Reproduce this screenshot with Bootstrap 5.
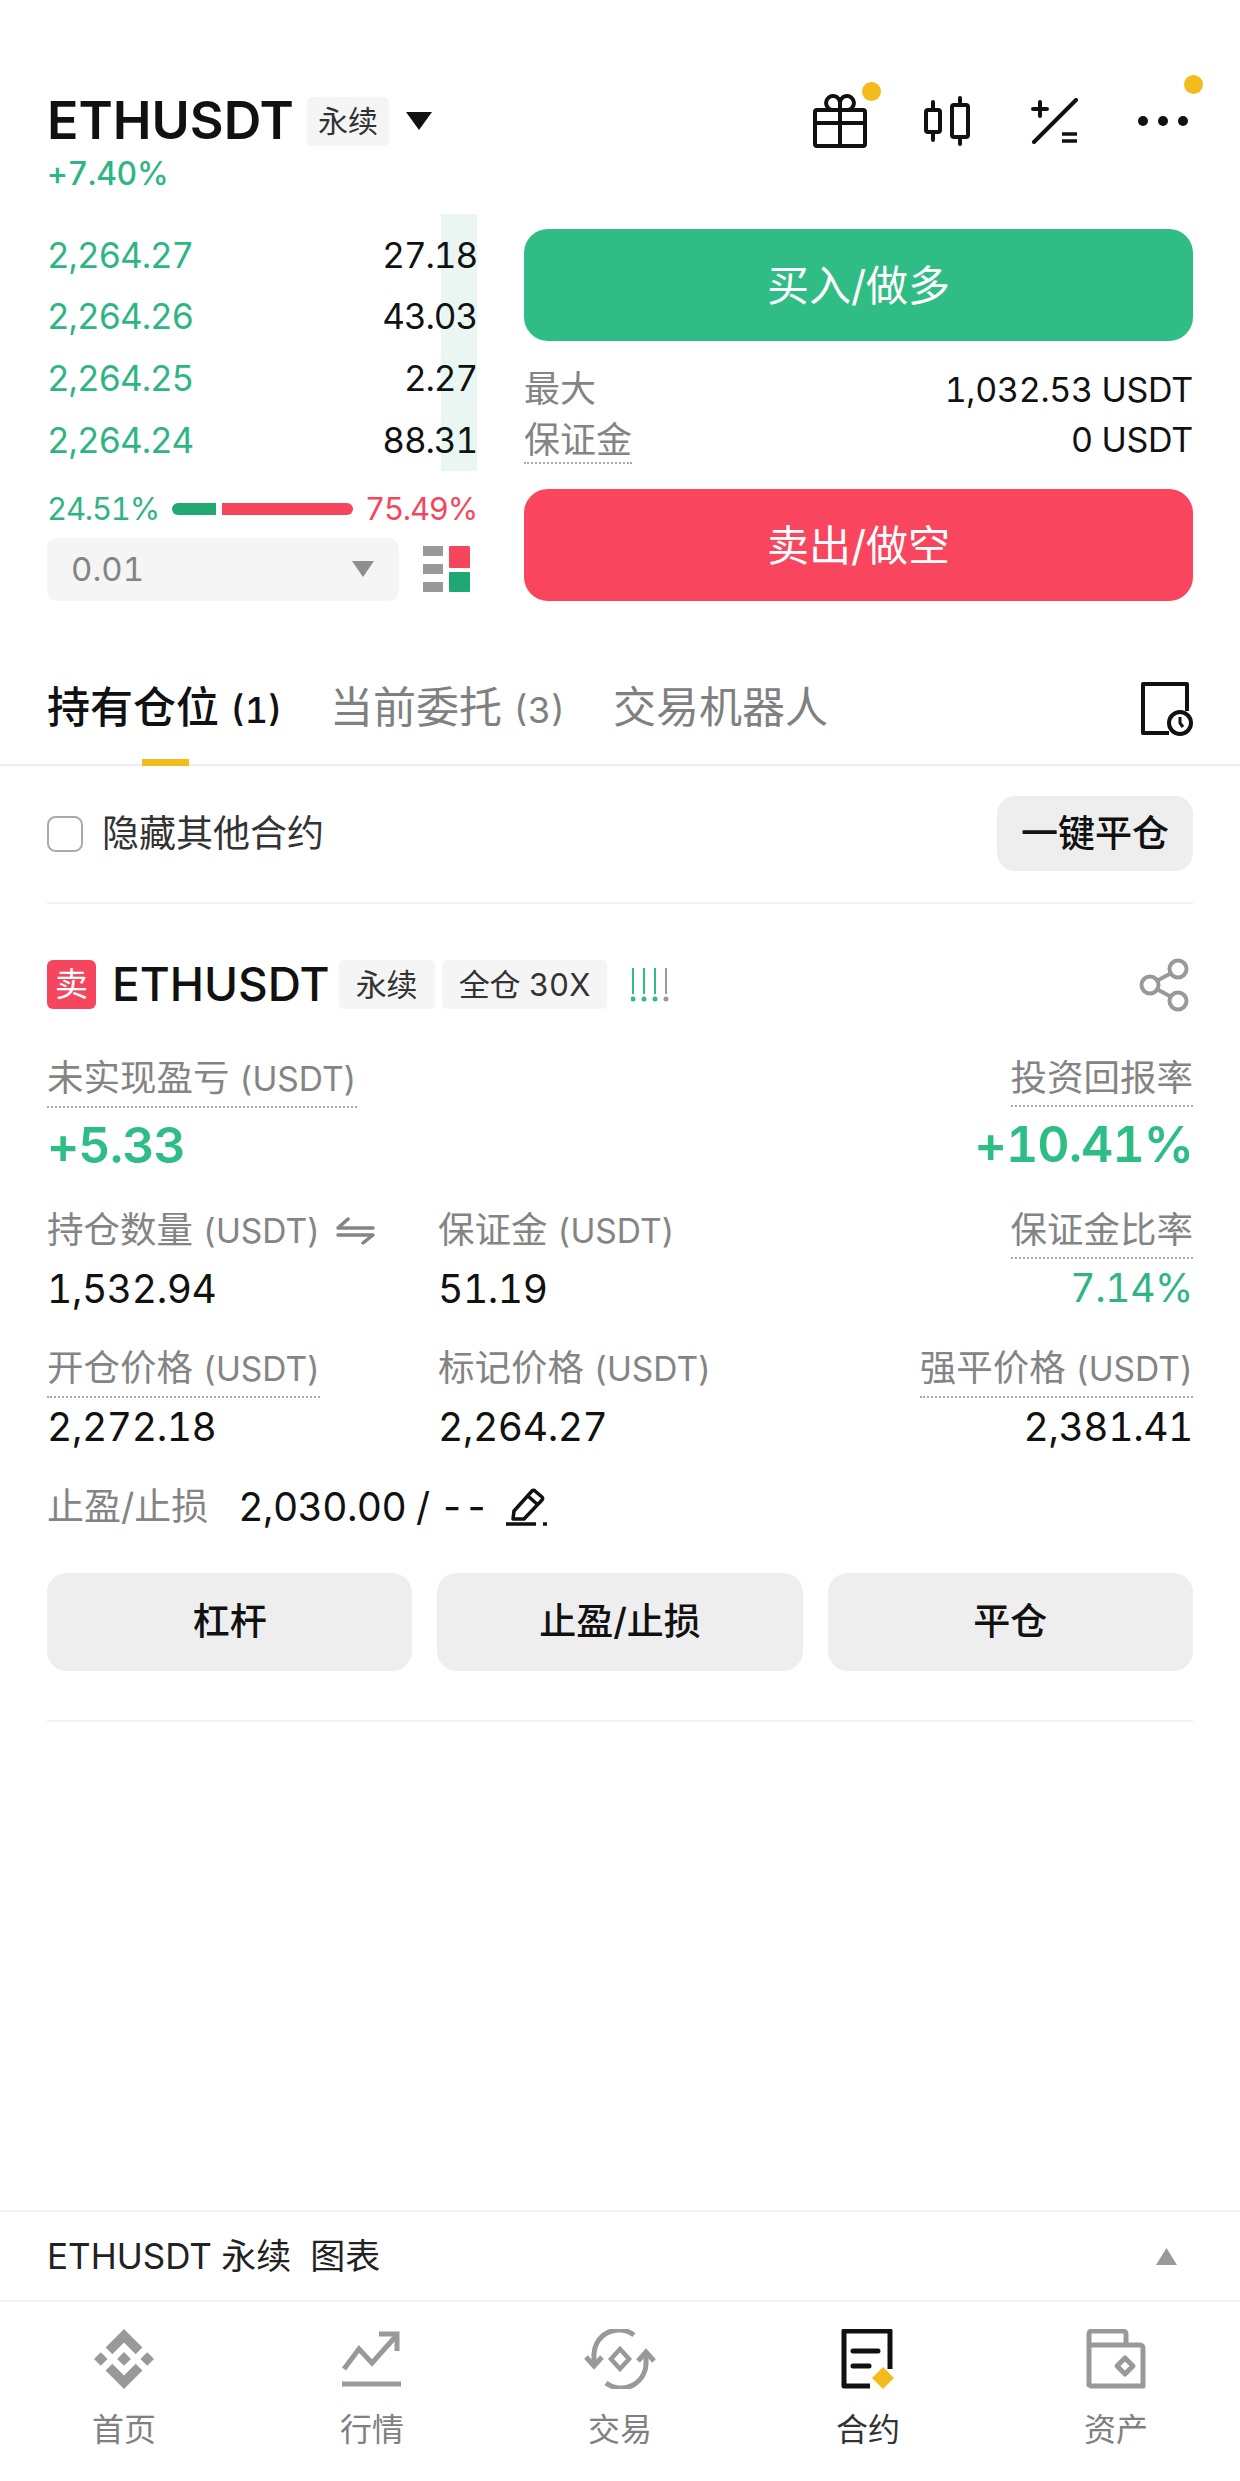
<!DOCTYPE html>
<html lang="zh-CN">
<head>
  <meta charset="UTF-8">
  <meta name="viewport" content="width=device-width, initial-scale=1.0">
  <title>ETHUSDT 永续</title>
  <link href="https://cdn.jsdelivr.net/npm/bootstrap@5.3.0/dist/css/bootstrap.min.css" rel="stylesheet">
  <script src="https://cdn.jsdelivr.net/npm/bootstrap@5.3.0/dist/js/bootstrap.bundle.min.js"></script>
  <style>
    body { font-family: "Inter", "Noto Sans CJK SC", sans-serif; color: #111; background: #fff; font-size: 34px; font-variant-numeric: tabular-nums; }
    svg { display: block; }
    .txt-green { color: #2fb585; }
    .txt-red { color: #f6465d; }
    .txt-grey { color: #848484; }

    .head-pad { padding: 90px 47px 0; }
    .head-row { height: 62px; }
    .pair-name { font-size: 52px; font-weight: 600; line-height: 62px; margin-right: 13px; }
    .tag-chip { background: #f5f5f5; border-radius: 5px; font-size: 30px; color: #333; height: 49px; line-height: 49px; padding: 0 11px; }
    .caret-down { width: 26px; height: 18px; margin-left: 17px; }
    .head-icons { height: 62px; padding-right: 5px; }
    .icon-wrap { width: 54px; height: 54px; }
    .note-dot { width: 19px; height: 19px; background: #f3bc1c; border-radius: 50%; top: -12px; right: -14px; }
    .day-change { font-size: 32px; letter-spacing: -0.3px; line-height: 40px; font-weight: 500; padding-top: 2px; height: 40px; }

    .trade-area { margin-top: 22px; gap: 47px; }
    .trade-left { width: 430px; }
    .book { padding-top: 10px; }
    .book-depth { top: 0; bottom: 0; right: 0; width: 36px; background: #e9f6f1; }
    .book-row { height: 61.7px; font-size: 35px; letter-spacing: -1.1px; }
    .ratio-row { margin-top: 20px; height: 36px; font-size: 31px; letter-spacing: -1.2px; margin-bottom: -1px; }
    .ratio-bars { gap: 6px; width: 181px; height: 12px; }
    .bar-buy { background: #22a873; border-radius: 6px 0 0 6px; }
    .bar-sell { background: #f6465d; border-radius: 0 6px 6px 0; }
    .size-row { margin-top: 12px; height: 63px; }
    .size-box { width: 352px; height: 63px; background: #f5f5f5; border-radius: 10px; padding: 0 25px 0 24px; font-size: 33px; color: #848484; }
    .mini-caret { width: 22px; height: 16px; }
    .depth-icon { margin-right: 7px; }

    .trade-right { width: 669px; padding-top: 15px; }
    .big-btn { height: 112px; border-radius: 24px; font-size: 42px; color: #fff; width: 100%; border: 0; }
    .btn-buy, .btn-buy:hover { background: #30bd85; color: #fff; }
    .btn-sell, .btn-sell:hover { background: #f9455d; color: #fff; }
    .avail-rows { margin-top: 23px; margin-bottom: 25px; font-size: 34px; letter-spacing: -0.3px; }
    .avail-line { height: 50px; }
    .avail-name { font-size: 36px; letter-spacing: 0; }
    .dash-under { border-bottom: 2px dotted #aaa; line-height: 1.2; padding-top: 5px; }

    .tab-row { margin-top: 65px; height: 100px; padding: 0 47px; border-bottom: 2px solid #eee; }
    .tab-item { font-size: 43px; line-height: 82px; margin-right: 48px; color: #808080; height: 98px; }
    .tab-on { color: #111; font-weight: 500; }
    .tab-mark { width: 47px; height: 7px; background: #f3bc1c; bottom: -2px; left: 50%; margin-left: -23px; }
    .tab-count { font-size: 36px; }
    .history-icon { margin-top: 16px; }

    .filter-row { margin: 0 47px; padding: 30px 0 31px; border-bottom: 2px solid #f2f2f2; }
    .hide-check { width: 36px; height: 36px; margin: 0 19px 0 0; border: 2px solid #aaa; border-radius: 5px; }
    .filter-label { font-size: 37px; color: #333; }
    .grey-btn, .grey-btn:hover { background: #eee; color: #111; border: 0; font-weight: 500; font-size: 37px; }
    .close-all { width: 196px; height: 75px; border-radius: 18px; padding: 0; }

    .pos-card { margin: 0 47px; padding: 56px 0 49px; border-bottom: 2px solid #f2f2f2; }
    .pos-head { height: 49px; }
    .side-badge { width: 49px; height: 49px; background: #f6465d; color: #fff; border-radius: 6px; font-size: 33px; line-height: 49px; text-align: center; }
    .pos-name { font-size: 46px; font-weight: 500; margin: 0 9px 0 16px; line-height: 49px; }
    .pos-tag { margin-right: 7px; padding: 0 17px; font-size: 31px; }
    .signal { margin-left: 17px; }

    .metric-one { width: 391px; }
    .lab { display: inline-block; font-size: 36.5px; line-height: 46px; color: #848484; padding-bottom: 4px; border-bottom: 2px dotted transparent; }
    .lab-unit { font-size: 33.5px; }
    .lab-dot { border-bottom-color: #aaa; }
    .val-big { font-size: 50px; letter-spacing: -1px; line-height: 60px; font-weight: 600; margin-top: 7px; color: #2ebd85; }
    .val { font-size: 39px; letter-spacing: -0.4px; line-height: 50px; margin-top: 4px; }
    .pnl-row { margin-top: 44px; }
    .row-two { margin-top: 30px; }
    .row-three { margin-top: 29px; }
    .tp-row { margin-top: 30px; height: 50px; }
    .tp-label { font-size: 37px; }
    .tp-val { font-size: 39px; letter-spacing: -0.6px; margin: 0 17px 0 30px; }
    .act-row { margin-top: 41px; gap: 25px; }
    .act-btn { height: 98px; border-radius: 20px; flex: 1 1 0; padding: 0; }

    .chart-bar { height: 92px; padding: 0 47px; border-top: 2px solid #f0f0f0; border-bottom: 2px solid #f0f0f0; font-size: 35px; color: #222; }
    .tabbar { height: 179px; padding-top: 27px; }
    .bar-icon { height: 60px; }
    .bar-label { font-size: 32px; line-height: 40px; margin-top: 21px; color: #808080; }
    .bar-label-on { color: #333; }
  </style>
</head>
<body class="d-flex flex-column min-vh-100">

  <!-- Header -->
  <div class="head-pad">
    <div class="head-row d-flex justify-content-between align-items-center">
      <div class="d-flex align-items-center">
        <span class="pair-name">ETHUSDT</span>
        <span class="tag-chip">永续</span>
        <svg class="caret-down" viewBox="0 0 26 18"><path d="M0 0h26L13 18z" fill="#111"/></svg>
      </div>
      <div class="head-icons d-flex align-items-center">
        <div class="icon-wrap position-relative">
          <svg width="54" height="54" viewBox="0 0 54 54" fill="none" stroke="#111" stroke-width="4" stroke-linejoin="round">
            <rect x="2" y="16" width="50" height="36" rx="2"/>
            <path d="M2 29h50M27 16v36"/>
            <path d="M27 16V10a7 7 0 1 0-7 6M27 16V10a7 7 0 1 1 7 6"/>
          </svg>
          <span class="note-dot position-absolute"></span>
        </div>
        <svg style="margin-left:57px" width="46" height="50" viewBox="0 0 46 50" fill="none" stroke="#111" stroke-width="4" stroke-linecap="round" stroke-linejoin="round">
          <rect x="2" y="14" width="14" height="22" rx="2"/>
          <rect x="28" y="9" width="16" height="32" rx="2"/>
          <path d="M9 6v8M9 36v8M36 2v7M36 41v7"/>
        </svg>
        <svg style="margin-left:61px" width="47" height="46" viewBox="0 0 47 46" fill="none" stroke="#111" stroke-linecap="round">
          <path d="M3 44 45 2" stroke-width="4"/>
          <path d="M2 11h14M9 4v14" stroke-width="4"/>
          <path d="M31 36h15M31 43h15" stroke-width="3.5" stroke-linecap="butt"/>
        </svg>
        <div class="position-relative" style="margin-left:60px">
          <svg width="50" height="12" viewBox="0 0 50 12" fill="#111"><circle cx="5" cy="6" r="5"/><circle cx="25" cy="6" r="5"/><circle cx="45" cy="6" r="5"/></svg>
          <span class="note-dot position-absolute" style="top:-40px;right:-15px"></span>
        </div>
      </div>
    </div>
    <div class="day-change txt-green">+7.40%</div>

    <!-- Order book + buy and sell -->
    <div class="trade-area d-flex">
      <div class="trade-left">
        <div class="book position-relative">
          <div class="book-depth position-absolute"></div>
          <div class="book-row d-flex justify-content-between align-items-center position-relative"><span class="txt-green">2,264.27</span><span>27.18</span></div>
          <div class="book-row d-flex justify-content-between align-items-center position-relative"><span class="txt-green">2,264.26</span><span>43.03</span></div>
          <div class="book-row d-flex justify-content-between align-items-center position-relative"><span class="txt-green">2,264.25</span><span>2.27</span></div>
          <div class="book-row d-flex justify-content-between align-items-center position-relative"><span class="txt-green">2,264.24</span><span>88.31</span></div>
        </div>
        <div class="ratio-row d-flex justify-content-between align-items-center">
          <span class="txt-green">24.51%</span>
          <div class="ratio-bars d-flex">
            <div class="bar-buy" style="width:24.51%"></div>
            <div class="bar-sell flex-grow-1"></div>
          </div>
          <span class="txt-red">75.49%</span>
        </div>
        <div class="size-row d-flex justify-content-between align-items-center">
          <div class="size-box d-flex justify-content-between align-items-center">
            <span>0.01</span>
            <svg class="mini-caret" viewBox="0 0 22 16"><path d="M0 0h22L11 16z" fill="#8e8e8e"/></svg>
          </div>
          <svg class="depth-icon" width="47" height="46" viewBox="0 0 47 46">
            <path d="M0 0h20v10H0zM0 18h20v10H0zM0 36h20v10H0z" fill="#999"/>
            <rect x="26" y="0" width="21" height="22" rx="1" fill="#f6465d"/>
            <rect x="26" y="26" width="21" height="20" rx="1" fill="#1fa874"/>
          </svg>
        </div>
      </div>

      <div class="trade-right">
        <button class="btn big-btn btn-buy">买入/做多</button>
        <div class="avail-rows">
          <div class="avail-line d-flex justify-content-between align-items-center"><span class="txt-grey avail-name">最大</span><span>1,032.53 USDT</span></div>
          <div class="avail-line d-flex justify-content-between align-items-center"><span class="txt-grey avail-name dash-under">保证金</span><span>0 USDT</span></div>
        </div>
        <button class="btn big-btn btn-sell">卖出/做空</button>
      </div>
    </div>
  </div>

  <!-- Tabs -->
  <div class="tab-row d-flex">
    <div class="tab-item tab-on position-relative">持有仓位 <span class="tab-count">(1)</span><span class="tab-mark position-absolute"></span></div>
    <div class="tab-item">当前委托 <span class="tab-count">(3)</span></div>
    <div class="tab-item">交易机器人</div>
    <svg class="ms-auto history-icon" width="52" height="54" viewBox="0 0 52 54" fill="none" stroke="#111" stroke-width="4" stroke-linejoin="round">
      <path d="M28 51H2V2h44v27"/>
      <circle cx="39" cy="41" r="11"/>
      <path d="M39 35v6l3 4" stroke-width="3"/>
    </svg>
  </div>

  <!-- Filter -->
  <div class="filter-row d-flex justify-content-between align-items-center">
    <div class="d-flex align-items-center">
      <input class="form-check-input hide-check" type="checkbox" id="hideOther">
      <label class="filter-label" for="hideOther">隐藏其他合约</label>
    </div>
    <button class="btn grey-btn close-all">一键平仓</button>
  </div>

  <!-- Position card -->
  <div class="pos-card">
    <div class="pos-head d-flex align-items-center">
      <span class="side-badge">卖</span>
      <span class="pos-name">ETHUSDT</span>
      <span class="tag-chip pos-tag">永续</span>
      <span class="tag-chip pos-tag">全仓 30X</span>
      <svg class="signal" width="38" height="34" viewBox="0 0 38 34">
        <g fill="#2ebd85">
          <rect x="1" y="0" width="2" height="26"/><circle cx="2" cy="31" r="2.5"/>
          <rect x="12" y="0" width="2" height="26"/><circle cx="13" cy="31" r="2.5"/>
          <rect x="23" y="0" width="2" height="26"/><circle cx="24" cy="31" r="2.5"/>
        </g>
        <g fill="#999"><rect x="34" y="0" width="2" height="26"/><circle cx="35" cy="31" r="2.5"/></g>
      </svg>
      <svg class="ms-auto me-1" width="50" height="54" viewBox="0 0 50 54" fill="none" stroke="#999" stroke-width="4">
        <circle cx="39" cy="11" r="8.5"/><circle cx="11" cy="27" r="8.5"/><circle cx="39" cy="43" r="8.5"/>
        <path d="M18.5 22.5 31.5 15.5M18.5 31.500 31.500 38.500"/>
      </svg>
    </div>

    <div class="pnl-row d-flex justify-content-between">
      <div>
        <div class="lab lab-dot">未实现盈亏 <span class="lab-unit">(USDT)</span></div>
        <div class="val-big">+5.33</div>
      </div>
      <div class="text-end">
        <div class="lab lab-dot">投资回报率</div>
        <div class="val-big">+10.41%</div>
      </div>
    </div>

    <div class="row-two d-flex">
      <div class="metric-one">
        <div class="lab d-inline-flex align-items-center"><span>持仓数量 <span class="lab-unit">(USDT)</span></span>
          <svg class="ms-3" width="39" height="28" viewBox="0 0 39 28" fill="none" stroke="#848484" stroke-width="3.500" stroke-linecap="round" stroke-linejoin="round">
            <path d="M37 11H2L12 2M2 18h35L27 26"/>
          </svg>
        </div>
        <div class="val">1,532.94</div>
      </div>
      <div class="flex-grow-1">
        <div class="lab">保证金 <span class="lab-unit">(USDT)</span></div>
        <div class="val">51.19</div>
      </div>
      <div class="text-end">
        <div class="lab lab-dot">保证金比率</div>
        <div class="val txt-green">7.14%</div>
      </div>
    </div>

    <div class="row-three d-flex">
      <div class="metric-one">
        <div class="lab lab-dot">开仓价格 <span class="lab-unit">(USDT)</span></div>
        <div class="val">2,272.18</div>
      </div>
      <div class="flex-grow-1">
        <div class="lab">标记价格 <span class="lab-unit">(USDT)</span></div>
        <div class="val">2,264.27</div>
      </div>
      <div class="text-end">
        <div class="lab lab-dot">强平价格 <span class="lab-unit">(USDT)</span></div>
        <div class="val">2,381.41</div>
      </div>
    </div>

    <div class="tp-row d-flex align-items-center">
      <span class="txt-grey tp-label">止盈/止损</span>
      <span class="tp-val">2,030.00 / --</span>
      <svg width="41" height="38" viewBox="0 0 41 38" fill="none" stroke="#111" stroke-width="3.500" stroke-linejoin="round">
        <path d="M8 23 26 3a2 2 0 0 1 3 0l7 6a2 2 0 0 1 0 3L18 31H7z"/>
        <path d="M22 8l10 9"/>
        <path d="M0 36h30"/>
        <path d="M37 36h4"/>
      </svg>
    </div>

    <div class="act-row d-flex">
      <button class="btn grey-btn act-btn">杠杆</button>
      <button class="btn grey-btn act-btn">止盈/止损</button>
      <button class="btn grey-btn act-btn">平仓</button>
    </div>
  </div>

  <!-- Chart bar and bottom navigation -->
  <div class="mt-auto">
    <div class="chart-bar d-flex justify-content-between align-items-center">
      <span>ETHUSDT 永续&nbsp; 图表</span>
      <svg class="me-3" width="21" height="17" viewBox="0 0 21 17"><path d="M10.500 0 21 17H0z" fill="#999"/></svg>
    </div>
    <div class="tabbar row g-0">
      <div class="col text-center">
        <div class="bar-icon d-flex justify-content-center">
          <svg width="60" height="60" viewBox="0 0 126.610 126.610" fill="#999">
            <path d="M38.730 53.200l24.590-24.580 24.600 24.600 14.300-14.310L63.320 0 24.430 38.900z"/>
            <path d="M0 63.310l14.300-14.310 14.310 14.310-14.310 14.300z"/>
            <path d="M38.730 73.410l24.590 24.590 24.600-24.600 14.310 14.290-38.900 38.910-38.910-38.880z"/>
            <path d="M98 63.310l14.300-14.310 14.310 14.310-14.300 14.300z"/>
            <path d="M77.830 63.300 63.320 48.780 48.810 63.280l14.510 14.500z"/>
          </svg>
        </div>
        <div class="bar-label">首页</div>
      </div>
      <div class="col text-center">
        <div class="bar-icon d-flex justify-content-center">
          <svg width="60" height="60" viewBox="0 0 60 60" fill="none" stroke="#999" stroke-width="5">
            <path d="M2 40 17 20l13 14L54 7"/>
            <path d="M37 5h18v17"/>
            <path d="M0 55h59"/>
          </svg>
        </div>
        <div class="bar-label">行情</div>
      </div>
      <div class="col text-center">
        <div class="bar-icon d-flex justify-content-center">
          <svg width="72" height="60" viewBox="0 0 72 60" fill="none" stroke="#999" stroke-width="5">
            <path d="M10 36V28A25 25 0 0 1 50 6"/>
            <path d="M2 28 10 37 18 28"/>
            <path d="M62 24v8A25 25 0 0 1 22 54"/>
            <path d="M54 32 62 23 70 32"/>
            <path d="M36 20 45 30 36 40 27 30z" stroke-width="4.500"/>
          </svg>
        </div>
        <div class="bar-label">交易</div>
      </div>
      <div class="col text-center">
        <div class="bar-icon d-flex justify-content-center">
          <svg width="54" height="60" viewBox="0 0 54 60" fill="none" stroke="#111" stroke-width="5">
            <path d="M29 57H3V2h46v38" stroke-linejoin="round"/>
            <path d="M12 22h25M12 37h16" stroke-linecap="round"/>
            <path d="M42 38 53 49 42 60 31 49z" fill="#f3bc1c" stroke="none"/>
          </svg>
        </div>
        <div class="bar-label bar-label-on">合约</div>
      </div>
      <div class="col text-center">
        <div class="bar-icon d-flex justify-content-center">
          <svg width="60" height="60" viewBox="0 0 60 60" fill="none" stroke="#999" stroke-width="5" stroke-linejoin="round">
            <path d="M3 56V5a3 3 0 0 1 3-3h31a3 3 0 0 1 3 3v11h14a3 3 0 0 1 3 3v38H6a3 3 0 0 1-3-3z"/>
            <path d="M3 16h37"/>
            <path d="M39 29 47 37 39 45 31 37z"/>
          </svg>
        </div>
        <div class="bar-label">资产</div>
      </div>
    </div>
  </div>

</body>
</html>
